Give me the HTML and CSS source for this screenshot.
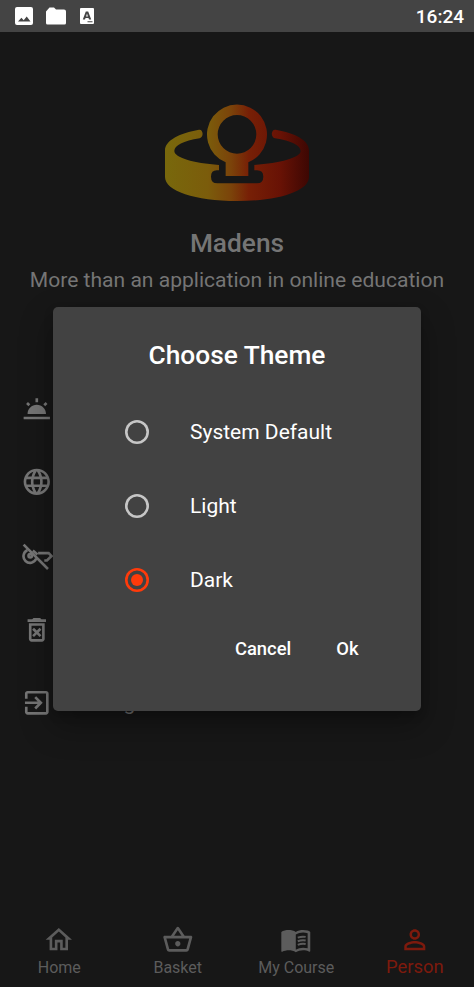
FILE: index.html
```html
<!DOCTYPE html>
<html lang="en">
<head>
<meta charset="utf-8">
<title>Madens</title>
<link rel="stylesheet" href="styles.css">
</head>
<body>
<div class="screen">
  <header class="status">
    <div class="status-icons">
      <svg width="18" height="18" viewBox="0 0 18 18"><path fill="#fff" fill-rule="evenodd" d="M2 0h14a2 2 0 012 2v14a2 2 0 01-2 2H2a2 2 0 01-2-2V2a2 2 0 012-2zM3 14.500h12.500l-3.800-5-3 3.700-2.300-2.500z"/></svg>
      <svg width="20" height="18" viewBox="0 0 20 18"><path fill="#fff" d="M3.500.500h4.500l2 2h8a2 2 0 012 2V16a1.500 1.500 0 01-1.500 1.500h-17A1.500 1.500 0 010 16V4.500z"/></svg>
      <svg width="14" height="17" viewBox="0 0 14 17"><path fill="#fff" fill-rule="evenodd" d="M1 0h12a1 1 0 011 1v14a1 1 0 01-1 1H1a1 1 0 01-1-1V1a1 1 0 011-1zM5.800 3.500L2.800 11.500h2.200l.5-1.500h3l.5 1.500h2.200L8.200 3.500zM7 5.600l.9 2.800H6.100zM7.500 13.200v1h5v-1z"/></svg>
    </div>
    <span class="clock">16:24</span>
  </header>

  <main class="page">
    <svg class="logo" width="165" height="115" viewBox="0 0 495 345">
      <defs><linearGradient id="gold" gradientUnits="userSpaceOnUse" x1="30" y1="0" x2="462" y2="0">
        <stop offset="0" stop-color="#78680c"/><stop offset=".3" stop-color="#7b5c0b"/><stop offset=".46" stop-color="#7b430a"/><stop offset=".58" stop-color="#772006"/><stop offset=".8" stop-color="#681205"/><stop offset="1" stop-color="#3d0703"/>
      </linearGradient></defs>
      <g fill="url(#gold)">
        <path d="M132 104C75 114 30 136 30 166V246C30 288 120 318 246 318S462 288 462 246V166C462 136 420 114 362 104C348 102 346 127 360 130C410 138 437 152 437 168C437 188 375 204 298 210V226H306Q325 226 325 245T306 265H187Q168 265 168 245T187 226H192V210C115 204 58 188 58 168C58 152 85 138 134 130C147 127 145 102 132 104Z"/>
        <path fill-rule="evenodd" d="M212 243V202A90 90 0 1 1 280 202V243ZM246 60A58 58 0 1 0 246 176A58 58 0 1 0 246 60Z"/>
      </g>
    </svg>
    <h1 class="brand">Madens</h1>
    <p class="tagline">More than an application in online education</p>
    <ul class="menu">
      <li><svg class="icon" viewBox="0 0 24 24"><path d="M16.950 8.640l1.770-1.770 1.410 1.410-1.770 1.770zM2 18h20v2H2zM11 4h2v3h-2zM3.870 8.270l1.420-1.420 1.770 1.770-1.420 1.420zM5 16h14c0-3.870-3.130-7-7-7s-7 3.130-7 7z"/></svg></li>
      <li><svg class="icon" viewBox="0 0 24 24"><path d="M11.990 2C6.470 2 2 6.480 2 12s4.470 10 9.990 10C17.520 22 22 17.520 22 12S17.520 2 11.990 2zm6.930 6h-2.950c-.32-1.250-.78-2.450-1.380-3.560 1.840.63 3.370 1.910 4.330 3.560zM12 4.040c.83 1.200 1.480 2.530 1.910 3.960h-3.820c.43-1.430 1.080-2.760 1.910-3.960zM4.260 14C4.100 13.360 4 12.690 4 12s.1-1.360.26-2h3.380c-.08.66-.14 1.320-.14 2s.06 1.340.14 2H4.260zm.82 2h2.950c.32 1.250.78 2.450 1.380 3.560-1.840-.63-3.370-1.900-4.330-3.560zm2.950-8H5.080c.96-1.660 2.490-2.930 4.330-3.560C8.810 5.550 8.350 6.750 8.030 8zM12 19.960c-.83-1.200-1.480-2.530-1.910-3.960h3.820c-.43 1.430-1.080 2.760-1.910 3.960zM14.340 14H9.660c-.09-.66-.16-1.320-.16-2s.07-1.350.16-2h4.680c.09.65.16 1.320.16 2s-.07 1.340-.16 2zm.25 5.560c.6-1.110 1.060-2.310 1.380-3.560h2.950c-.96 1.650-2.490 2.930-4.330 3.560zM16.360 14c.08-.66.14-1.320.14-2s-.06-1.340-.14-2h3.380c.16.64.26 1.310.26 2s-.1 1.360-.26 2h-3.380z"/></svg></li>
      <li><svg class="icon key" viewBox="0 0 24 24"><path d="M2 3.500l18.500 18.500M4.800 7.800A5 5 0 1 0 11.500 14.300M13 10h8l2.200 2.200-3.500 3.400h-2"/><circle cx="7" cy="12" r="1.300"/><path d="M9 8l3.500 3"/></svg></li>
      <li><svg class="icon" viewBox="0 0 24 24"><path d="M14.120 10.470L12 12.590l-2.130-2.120-1.410 1.410L10.590 14l-2.120 2.120 1.410 1.410L12 15.410l2.120 2.120 1.410-1.410L13.410 14l2.120-2.120zM15.500 4l-1-1h-5l-1 1H5v2h14V4zM6 19c0 1.100.9 2 2 2h8c1.100 0 2-.9 2-2V7H6v12zM8 9h8v10H8V9z"/></svg></li>
      <li><svg class="icon" viewBox="0 0 24 24"><path d="M10.090 15.590L11.500 17l5-5-5-5-1.410 1.410L12.670 11H3v2h9.670l-2.580 2.590zM19 3H5c-1.110 0-2 .9-2 2v4h2V5h14v14H5v-4H3v4c0 1.100.89 2 2 2h14c1.100 0 2-.9 2-2V5c0-1.100-.9-2-2-2z"/></svg><span class="menu-label">g</span></li>
    </ul>
  </main>

  <nav class="tabs">
    <div class="tab"><svg class="icon" viewBox="0 0 24 24"><path d="M12 5.690l5 4.500V18h-2v-6H9v6H7v-7.810l5-4.500M12 3L2 12h3v8h6v-6h2v6h6v-8h3L12 3z"/></svg><span>Home</span></div>
    <div class="tab"><svg class="icon" viewBox="0 0 24 24"><path d="M22 9h-4.790l-4.380-6.560c-.19-.28-.51-.42-.83-.42s-.64.14-.83.43L6.790 9H2c-.55 0-1 .45-1 1 0 .09.01.18.04.27l2.540 9.270c.23.84 1 1.460 1.920 1.460h13c.92 0 1.690-.62 1.930-1.460l2.540-9.270L23 10c0-.55-.45-1-1-1zM12 4.800L14.800 9H9.200L12 4.800zM18.500 19l-12.990.01L3.310 11H20.700l-2.200 8zM12 13c-1.100 0-2 .9-2 2s.9 2 2 2 2-.9 2-2-.9-2-2-2z"/></svg><span>Basket</span></div>
    <div class="tab"><svg class="icon" viewBox="0 0 24 24"><path d="M21 5c-1.110-.35-2.330-.5-3.500-.5-1.950 0-4.050.4-5.500 1.500-1.450-1.100-3.550-1.500-5.500-1.500S2.450 4.900 1 6v14.650c0 .25.25.5.5.5.1 0 .15-.05.25-.05C3.100 20.450 5.050 20 6.500 20c1.950 0 4.050.4 5.500 1.500 1.350-.85 3.800-1.500 5.500-1.500 1.650 0 3.350.3 4.750 1.050.1.05.15.05.25.05.25 0 .5-.25.5-.5V6c-.6-.45-1.250-.75-2-1zm0 13.500c-1.100-.35-2.300-.5-3.500-.5-1.700 0-4.150.65-5.500 1.500V8c1.350-.85 3.800-1.500 5.500-1.500 1.200 0 2.400.15 3.500.5v11.500z"/><path fill="none" stroke="currentColor" stroke-width="1.500" d="M13.500 10.400q3-1.200 6-.6M13.500 13.100q3-1.200 6-.6M13.500 15.800q3-1.200 6-.6"/></svg><span>My Course</span></div>
    <div class="tab active"><svg class="icon" viewBox="0 0 24 24"><path d="M12 5.900a2.100 2.100 0 110 4.200 2.100 2.100 0 010-4.200m0 9c2.970 0 6.100 1.460 6.100 2.100v1.100H5.900V17c0-.64 3.130-2.100 6.100-2.100M12 4C9.790 4 8 5.790 8 8s1.790 4 4 4 4-1.790 4-4-1.790-4-4-4zm0 9c-2.670 0-8 1.340-8 4v3h16v-3c0-2.660-5.330-4-8-4z"/></svg><span>Person</span></div>
  </nav>

  <section class="dialog">
    <h2 class="dialog-title">Choose Theme</h2>
    <div class="option"><i class="radio"></i><span>System Default</span></div>
    <div class="option"><i class="radio"></i><span>Light</span></div>
    <div class="option"><i class="radio on"></i><span>Dark</span></div>
    <div class="actions"><span>Cancel</span><span>Ok</span></div>
  </section>
</div>
</body>
</html>
```
FILE: styles.css
```css
* { box-sizing: border-box; margin: 0; padding: 0; }
body { background: #171717; font-family: Roboto, "Liberation Sans", sans-serif; }
.screen { position: relative; width: 474px; height: 987px; overflow: hidden; display: flex; flex-direction: column; background: #171717; color: #757575; }
.status { flex: none; height: 32px; background: #444; display: flex; justify-content: space-between; align-items: center; padding: 0 10px 0 15px; }
.status-icons { display: flex; align-items: center; gap: 13px; }
.status-icons svg:last-child { margin-left: 1px; }
.clock { color: #fff; font-size: 19px; font-weight: 500; line-height: 32px; padding-top: 1px; }
.page { flex: 1; display: flex; flex-direction: column; align-items: center; padding-top: 63px; }
.logo { flex: none; }
.brand { margin-top: 16px; font-size: 26.300px; font-weight: 500; line-height: 34px; }
.tagline { margin-top: 6px; font-size: 21.070px; line-height: 28px; white-space: nowrap; }
.menu { align-self: stretch; margin-top: 77.500px; list-style: none; }
.menu li { height: 73.700px; display: flex; align-items: center; padding-left: 21px; }
.menu-label { margin-left: 71px; font-size: 21px; line-height: 28px; }
.icon { display: block; flex: none; width: 31.600px; height: 31.600px; fill: currentColor; }
.key { fill: none; stroke: currentColor; stroke-width: 2; }
.tabs { flex: none; height: 74px; display: grid; grid-template-columns: repeat(4, 1fr); color: #5c5c5c; }
.tab { display: flex; flex-direction: column; align-items: center; padding-top: 11px; font-size: 16px; line-height: 24px; }
.tab.active { color: #7d1a0d; font-size: 18.400px; line-height: 22px; }
.dialog { position: absolute; left: 53px; top: 307px; width: 368px; height: 404px; border-radius: 5px; background: #424242; color: #fff; box-shadow: 0 14px 32px 2px rgba(0,0,0,.28), 0 4px 10px rgba(0,0,0,.2); }
.dialog-title { margin-top: 31px; text-align: center; font-size: 26.300px; font-weight: 500; line-height: 34px; }
.option { height: 73.700px; display: flex; align-items: center; padding-left: 72px; gap: 41px; font-size: 21px; line-height: 28px; }
.dialog-title + .option { margin-top: 23.600px; }
.radio { width: 24px; height: 24px; color: #c6c6c6; box-shadow: inset 0 0 0 2.600px currentColor; border-radius: 50%; display: grid; place-items: center; }
.radio.on { color: #ff3a0a; }
.radio.on::after { content: ""; width: 12px; height: 12px; border-radius: 50%; background: currentColor; }
.actions { display: flex; justify-content: flex-end; gap: 45px; margin-top: 19px; padding-right: 62.500px; font-size: 18.400px; font-weight: 500; line-height: 26px; }
```
